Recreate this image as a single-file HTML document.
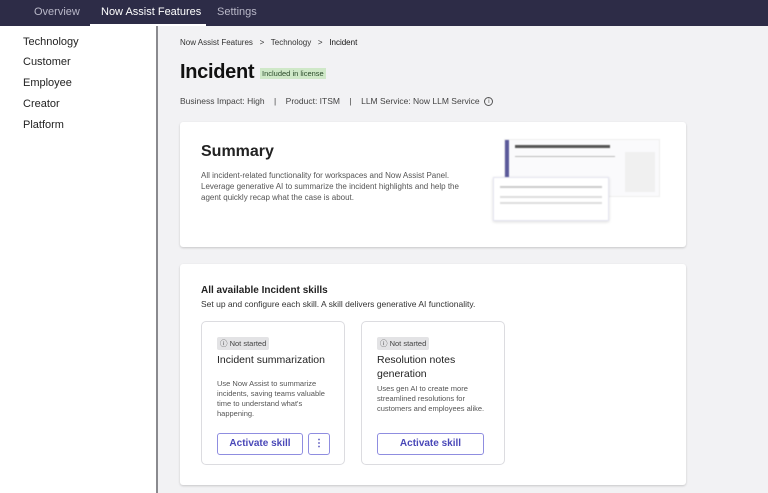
<!DOCTYPE html>
<html><head><meta charset="utf-8"><style>
*{box-sizing:border-box;margin:0;padding:0}
body{width:768px;height:493px;overflow:hidden;font-family:"Liberation Sans",sans-serif;background:#f2f2f4;position:relative;color:#1d1d22}
.nav{position:absolute;left:0;top:0;width:768px;height:26px;background:#2d2c47}
.nav span{position:absolute;top:6px;font-size:11px;color:#b9b8c8}
.nav .act{color:#fff}
.nav .ul{position:absolute;left:90px;top:24px;width:116px;height:2px;background:#fff}
.side{position:absolute;left:0;top:26px;width:158px;height:467px;background:#fff;border-right:2px solid #8a8a8e}
.side div{position:absolute;left:23px;font-size:11px;color:#222}
.a{position:absolute;white-space:nowrap}
.card{position:absolute;background:#fff;border-radius:3px;box-shadow:0 1px 2px rgba(0,0,0,.18)}
.sk{position:absolute;top:321px;width:144px;height:144px;border:1px solid #dcdce0;border-radius:5px;background:#fff}
.pill{position:absolute;left:15px;top:15px;background:#e3e3e5;font-size:7.5px;color:#444;padding:1px 3px;border-radius:2px}
.btn{position:absolute;top:111px;height:22px;border:1px solid #8f8de0;border-radius:3px;color:#4a48b8;font-size:10px;font-weight:bold;text-align:center;line-height:20px}
.sk h4{position:absolute;left:15px;top:31px;font-size:10.5px;font-weight:normal;line-height:14px;color:#222}
.sk p{position:absolute;left:15px;font-size:7.5px;line-height:10px;color:#555}
</style></head><body>
<div class="nav"><span style="left:34px">Overview</span><span class="act" style="left:101px">Now Assist Features</span><span style="left:217px">Settings</span><div class="ul"></div></div>
<div class="side"><div style="top:10px">Technology</div><div style="top:30px">Customer</div><div style="top:51px">Employee</div><div style="top:72px">Creator</div><div style="top:93px">Platform</div></div>
<div class="a" style="left:180px;top:38px;font-size:8px;color:#333">Now Assist Features &nbsp;&nbsp;&gt;&nbsp;&nbsp; Technology &nbsp;&nbsp;&gt;&nbsp;&nbsp; <b style="color:#111;font-weight:normal">Incident</b></div>
<div class="a" style="left:180px;top:61px;font-size:20px;font-weight:bold;color:#111;letter-spacing:-0.3px">Incident</div>
<div class="a" style="left:260px;top:68px;font-size:7.5px;background:#cfe8c8;color:#2a4a2a;padding:1px 2px">Included in license</div>
<div class="a" style="left:180px;top:96px;font-size:8.5px;color:#444">Business Impact: High &nbsp;&nbsp;&nbsp;|&nbsp;&nbsp;&nbsp; Product: ITSM &nbsp;&nbsp;&nbsp;|&nbsp;&nbsp;&nbsp; LLM Service: Now LLM Service &nbsp;<span style="display:inline-block;width:9px;height:9px;border:1px solid #555;border-radius:50%;font-size:6px;text-align:center;line-height:8px;vertical-align:middle">i</span></div>
<div class="card" style="left:180px;top:122px;width:506px;height:125px">
<div class="a" style="left:21px;top:21px;font-size:16px;font-weight:bold;color:#222">Summary</div>
<div class="a" style="left:21px;top:48px;font-size:8px;line-height:11px;color:#555;white-space:normal;width:268px">All incident-related functionality for workspaces and Now Assist Panel. Leverage generative AI to summarize the incident highlights and help the agent quickly recap what the case is about.</div>
<div class="a" style="left:324px;top:17px;width:156px;height:58px;background:#fafafc;border:1px solid #eee;filter:blur(.6px)">
<div style="position:absolute;left:0;top:0;width:4px;height:58px;background:#5b5a9a"></div>
<div style="position:absolute;left:10px;top:5px;width:95px;height:3px;background:#555"></div>
<div style="position:absolute;left:10px;top:16px;width:100px;height:1px;background:#bbb"></div>
<div style="position:absolute;left:120px;top:12px;width:30px;height:40px;background:#f0f0f0"></div>
</div>
<div class="a" style="left:313px;top:55px;width:116px;height:44px;background:#fff;border:1px solid #e4e4f0;box-shadow:0 1px 3px rgba(0,0,0,.15);filter:blur(.5px)">
<div style="margin:8px 6px;height:2px;background:#ccc"></div><div style="margin:4px 6px;height:2px;background:#ddd"></div><div style="margin:4px 6px;height:2px;background:#ddd"></div></div>
</div>
<div class="card" style="left:180px;top:264px;width:506px;height:221px">
<div class="a" style="left:21px;top:21px;font-size:10px;font-weight:bold;color:#222">All available Incident skills</div>
<div class="a" style="left:21px;top:35px;font-size:8.5px;color:#333">Set up and configure each skill. A skill delivers generative AI functionality.</div>
</div>
<div class="sk" style="left:201px">
<div class="pill">ⓘ Not started</div><h4>Incident summarization</h4>
<p style="top:57px;width:115px">Use Now Assist to summarize incidents, saving teams valuable time to understand what's happening.</p>
<div class="btn" style="left:15px;width:86px">Activate skill</div>
<div class="btn" style="left:106px;width:22px">⋮</div></div>
<div class="sk" style="left:361px">
<div class="pill">ⓘ Not started</div><h4>Resolution notes<br>generation</h4>
<p style="top:62px;width:115px">Uses gen AI to create more streamlined resolutions for customers and employees alike.</p>
<div class="btn" style="left:15px;width:107px">Activate skill</div></div>
</body></html>
